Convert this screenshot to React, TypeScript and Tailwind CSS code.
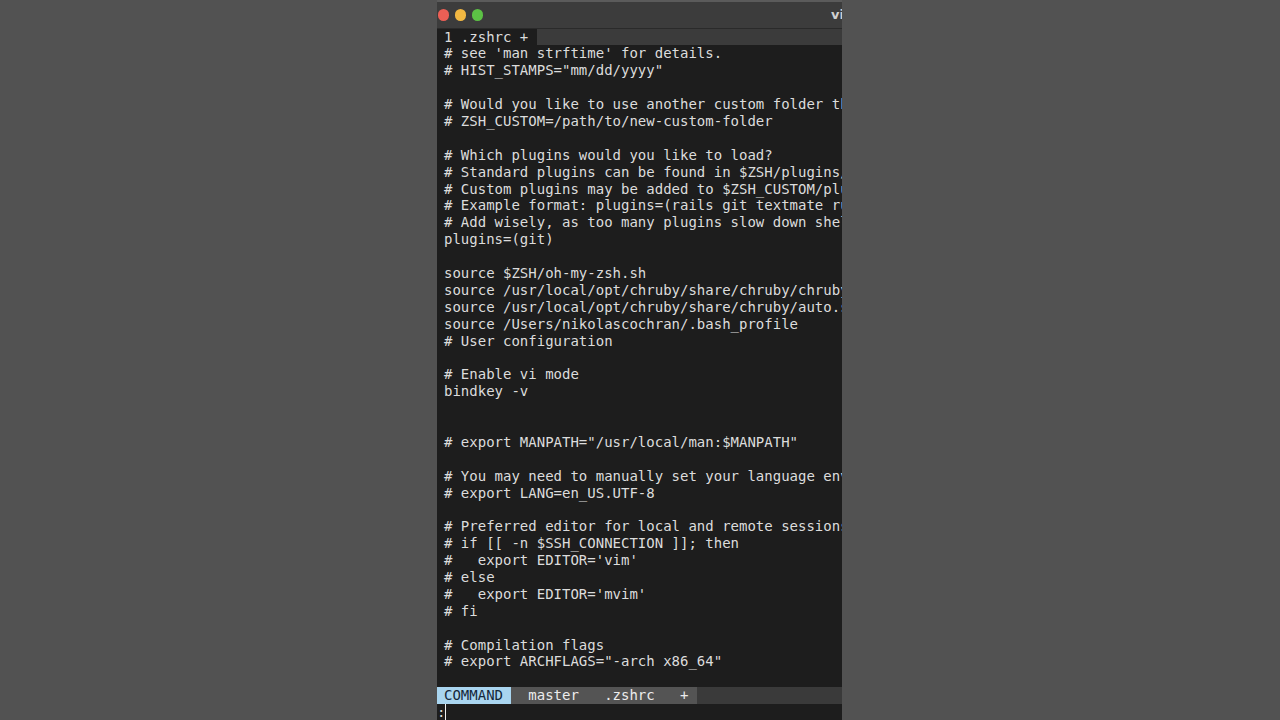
const lines: string[] = [
  "# see 'man strftime' for details.",
  '# HIST_STAMPS="mm/dd/yyyy"',
  '',
  '# Would you like to use another custom folder than $ZSH/custom?',
  '# ZSH_CUSTOM=/path/to/new-custom-folder',
  '',
  '# Which plugins would you like to load?',
  '# Standard plugins can be found in $ZSH/plugins/',
  '# Custom plugins may be added to $ZSH_CUSTOM/plugins/',
  '# Example format: plugins=(rails git textmate ruby lighthouse)',
  '# Add wisely, as too many plugins slow down shell startup.',
  'plugins=(git)',
  '',
  'source $ZSH/oh-my-zsh.sh',
  'source /usr/local/opt/chruby/share/chruby/chruby.sh',
  'source /usr/local/opt/chruby/share/chruby/auto.sh',
  'source /Users/nikolascochran/.bash_profile',
  '# User configuration',
  '',
  '# Enable vi mode',
  'bindkey -v',
  '',
  '',
  '# export MANPATH="/usr/local/man:$MANPATH"',
  '',
  '# You may need to manually set your language environment',
  '# export LANG=en_US.UTF-8',
  '',
  '# Preferred editor for local and remote sessions',
  '# if [[ -n $SSH_CONNECTION ]]; then',
  "#   export EDITOR='vim'",
  '# else',
  "#   export EDITOR='mvim'",
  '# fi',
  '',
  '# Compilation flags',
  '# export ARCHFLAGS="-arch x86_64"',
  '',
];

export default function App() {
  return (
    <div className="h-[720px] w-[1280px] overflow-hidden bg-[#525252] flex">
      {/* terminal window, cropped on the right like the video */}
      <div className="ml-[437px] w-[405px] h-full flex flex-col overflow-hidden bg-[#1d1d1d] font-['DejaVu_Sans_Mono',monospace] text-[14px] text-[#dcdcdc]">
        {/* title bar */}
        <div className="h-[28.5px] shrink-0 flex items-center bg-[#3c3c3c] border-t-2 border-t-[#5b5b5b] border-b border-b-[#2a2a2a]">
          <div className="flex items-center gap-[5.5px] pl-[0.5px]">
            <span className="w-[11.5px] h-[11.5px] rounded-full bg-[#ec5f55]" />
            <span className="w-[11.5px] h-[11.5px] rounded-full bg-[#f2b842]" />
            <span className="w-[11.5px] h-[11.5px] rounded-full bg-[#5cc245]" />
          </div>
          <span className="ml-auto mr-[-2px] font-['DejaVu_Sans',sans-serif] text-[13px] font-bold text-[#d0d0d0]">
            vi
          </span>
        </div>

        {/* tab line */}
        <div className="h-[16.9px] shrink-0 flex leading-[16.9px] bg-[#3b3b3b] whitespace-pre">
          <span className="bg-[#1d1d1d] pl-[7px]">{'1 .zshrc + '}</span>
        </div>

        {/* buffer */}
        {lines.map((l, i) => (
          <div key={i} className="h-[16.9px] shrink-0 leading-[16.9px] pl-[7px] whitespace-pre">
            {l}
          </div>
        ))}

        {/* status line */}
        <div className="h-[16.9px] shrink-0 flex leading-[16.9px] bg-[#3a3a3a] whitespace-pre">
          <span className="bg-[#a9d5ef] text-[#15283a] pl-[7px]">{'COMMAND '}</span>
          <span className="bg-[#545454] text-[#ececec]">{'  master   .zshrc   + '}</span>
        </div>

        {/* command line */}
        <div className="h-[16.9px] shrink-0 flex items-stretch leading-[16.9px] whitespace-pre">
          <span>:</span>
          <span className="w-[1px] bg-[#f0f0f0]" />
        </div>
      </div>
    </div>
  );
}
